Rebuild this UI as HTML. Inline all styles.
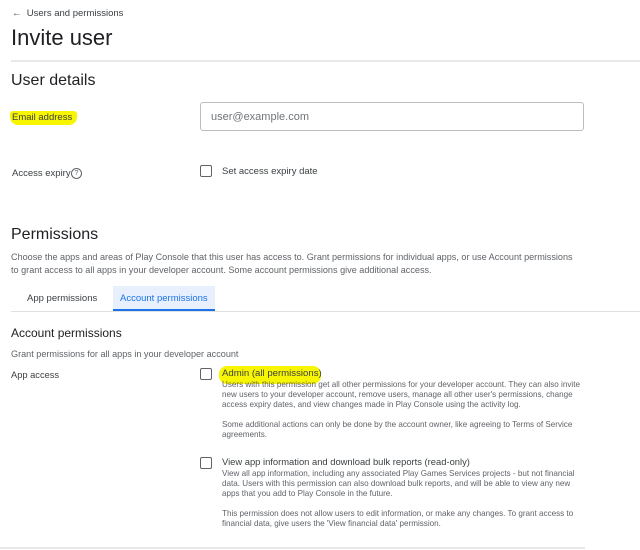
<!DOCTYPE html>
<html><head><style>
body{margin:0;width:640px;height:550px;background:#fff;position:relative;overflow:hidden;font-family:"Liberation Sans",Arial,sans-serif;color:#202124}
.a{position:absolute;white-space:nowrap}
.hl{position:absolute;background:#f8f500;border-radius:6px}
.cb{position:absolute;width:10px;height:10px;border:1.5px solid #5f6368;border-radius:2px}
.d{font-size:8.1px;color:#5f6368;line-height:10px}
</style></head><body>
<div class="a" style="left:12px;top:8px;font-size:9.5px;color:#3c4043">←&nbsp; Users and permissions</div>
<div class="a" style="left:11px;top:25px;font-size:22px">Invite user</div>
<div class="a" style="left:11px;top:60px;width:629px;height:2px;background:#e8e8e8"></div>
<div class="a" style="left:11px;top:72px;font-size:16px">User details</div>
<div class="hl" style="left:10px;top:111px;width:67px;height:14px;border-radius:3px 3px 8px 8px"></div>
<div class="a" style="left:12px;top:112px;font-size:9.5px;color:#3c4043">Email address</div>
<div class="a" style="left:200px;top:102px;width:382px;height:27px;border:1px solid #bdbdbd;border-radius:3px"></div>
<div class="a" style="left:211px;top:111px;font-size:11px;color:#70757a">user@example.com</div>
<div class="a" style="left:12px;top:168px;font-size:9.5px;color:#3c4043">Access expiry</div>
<div class="a" style="left:71px;top:168px;width:9px;height:9px;border:1px solid #5f6368;border-radius:50%;font-size:7px;text-align:center;line-height:9px;color:#5f6368">?</div>
<div class="cb" style="left:200px;top:165px"></div>
<div class="a" style="left:222px;top:166px;font-size:9.5px;color:#3c4043">Set access expiry date</div>
<div class="a" style="left:11px;top:226px;font-size:16px">Permissions</div>
<div class="a d" style="left:11px;top:251px;font-size:9.1px;line-height:13px">Choose the apps and areas of Play Console that this user has access to. Grant permissions for individual apps, or use Account permissions<br>to grant access to all apps in your developer account. Some account permissions give additional access.</div>
<div class="a" style="left:27px;top:293px;font-size:9.5px;color:#3c4043">App permissions</div>
<div class="a" style="left:113px;top:286px;width:102px;height:23px;background:#e8f0fe;border-bottom:2px solid #1a73e8"></div>
<div class="a" style="left:120px;top:293px;font-size:9.5px;color:#1a73e8">Account permissions</div>
<div class="a" style="left:11px;top:311px;width:629px;height:1px;background:#e0e0e0"></div>
<div class="a" style="left:11px;top:326px;font-size:12px">Account permissions</div>
<div class="a d" style="left:11px;top:349px;font-size:9.1px">Grant permissions for all apps in your developer account</div>
<div class="a" style="left:11px;top:370px;font-size:9.3px;color:#3c4043">App access</div>
<div class="cb" style="left:200px;top:368px"></div>
<div class="hl" style="left:219px;top:366px;width:102px;height:18px;border-radius:8px"></div>
<div class="a" style="left:222px;top:368px;font-size:9.6px;color:#3c4043">Admin (all permissions)</div>
<div class="a d" style="left:222px;top:380px">Users with this permission get all other permissions for your developer account. They can also invite<br>new users to your developer account, remove users, manage all other user's permissions, change<br>access expiry dates, and view changes made in Play Console using the activity log.<br><br>Some additional actions can only be done by the account owner, like agreeing to Terms of Service<br>agreements.</div>
<div class="cb" style="left:200px;top:457px"></div>
<div class="a" style="left:222px;top:456px;font-size:9.4px;color:#3c4043">View app information and download bulk reports (read-only)</div>
<div class="a d" style="left:222px;top:469px">View all app information, including any associated Play Games Services projects - but not financial<br>data. Users with this permission can also download bulk reports, and will be able to view any new<br>apps that you add to Play Console in the future.<br><br>This permission does not allow users to edit information, or make any changes. To grant access to<br>financial data, give users the 'View financial data' permission.</div>
<div class="a" style="left:0;top:547px;width:585px;height:2px;background:#e8e8e8"></div>
</body></html>
